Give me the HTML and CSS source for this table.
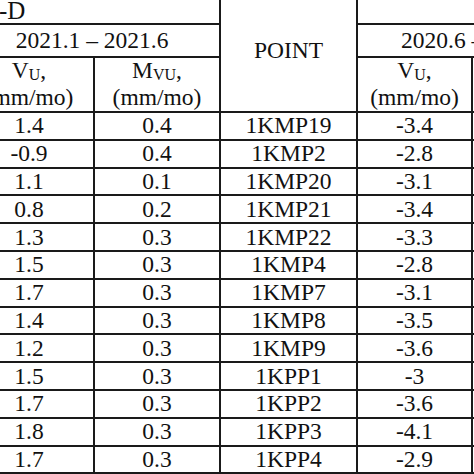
FILE: index.html
```html
<!DOCTYPE html>
<html>
<head>
<meta charset="utf-8">
<link rel="stylesheet" href="styles.css">
</head>
<body>
<div class="frame">
<table class="grid">
  <colgroup>
    <col class="c1"><col class="c2"><col class="c3"><col class="c4"><col class="c5">
  </colgroup>
  <tr class="r-top">
    <td colspan="2" class="group-left">-D</td>
    <td rowspan="3" class="point">POINT</td>
    <td colspan="2" class="group-right"></td>
  </tr>
  <tr class="r-period">
    <td colspan="2">2021.1 – 2021.6</td>
    <td colspan="2" class="period-right">2020.6 – 2020.12</td>
  </tr>
  <tr class="r-head">
    <td>V<span class="sb">U</span>,<br>(mm/mo)</td>
    <td>M<span class="sb">VU</span>,<br>(mm/mo)</td>
    <td>V<span class="sb">U</span>,<br>(mm/mo)</td>
    <td></td>
  </tr>
  <tr><td>1.4</td><td>0.4</td><td>1KMP19</td><td>-3.4</td><td></td></tr>
  <tr><td>-0.9</td><td>0.4</td><td>1KMP2</td><td>-2.8</td><td></td></tr>
  <tr><td>1.1</td><td>0.1</td><td>1KMP20</td><td>-3.1</td><td></td></tr>
  <tr><td>0.8</td><td>0.2</td><td>1KMP21</td><td>-3.4</td><td></td></tr>
  <tr><td>1.3</td><td>0.3</td><td>1KMP22</td><td>-3.3</td><td></td></tr>
  <tr><td>1.5</td><td>0.3</td><td>1KMP4</td><td>-2.8</td><td></td></tr>
  <tr><td>1.7</td><td>0.3</td><td>1KMP7</td><td>-3.1</td><td></td></tr>
  <tr><td>1.4</td><td>0.3</td><td>1KMP8</td><td>-3.5</td><td></td></tr>
  <tr><td>1.2</td><td>0.3</td><td>1KMP9</td><td>-3.6</td><td></td></tr>
  <tr><td>1.5</td><td>0.3</td><td>1KPP1</td><td>-3</td><td></td></tr>
  <tr><td>1.7</td><td>0.3</td><td>1KPP2</td><td>-3.6</td><td></td></tr>
  <tr><td>1.8</td><td>0.3</td><td>1KPP3</td><td>-4.1</td><td></td></tr>
  <tr><td>1.7</td><td>0.3</td><td>1KPP4</td><td>-2.9</td><td></td></tr>
</table>
</div>
</body>
</html>
```
FILE: styles.css
```css
html, body {
  margin: 0;
  padding: 0;
  background: #fff;
}
.frame {
  width: 474px;
  height: 474px;
  overflow: hidden;
}
.grid {
  border-collapse: collapse;
  table-layout: fixed;
  width: 620px;
  margin-left: -37px;
  margin-top: -5px;
  font-family: "Liberation Serif", "Times New Roman", serif;
  font-size: 23.5px;
  color: #111;
}
.c1 { width: 130px; }
.c2 { width: 126px; }
.c3 { width: 137px; }
.c4 { width: 115px; }
.c5 { width: 112px; }
.grid td {
  border: 2px solid #1a1a1a;
  text-align: center;
  vertical-align: middle;
  padding: 0;
  line-height: 25px;
  white-space: nowrap;
  overflow: hidden;
}
.grid tr { height: 27.8px; }
.grid tr.r-top { height: 28px; }
.grid tr.r-period { height: 33px; }
.grid tr.r-head { height: 55px; }
.group-left {
  text-align: left !important;
  padding-left: 34px !important;
  font-size: 25px;
}
.period-right {
  text-align: left !important;
  padding-left: 43px !important;
}
.r-head td {
  line-height: 24px;
  padding-bottom: 2px;
}
.point {
  padding-bottom: 8px !important;
}
.sb {
  font-size: 0.68em;
  position: relative;
  top: 0.1em;
}
```
